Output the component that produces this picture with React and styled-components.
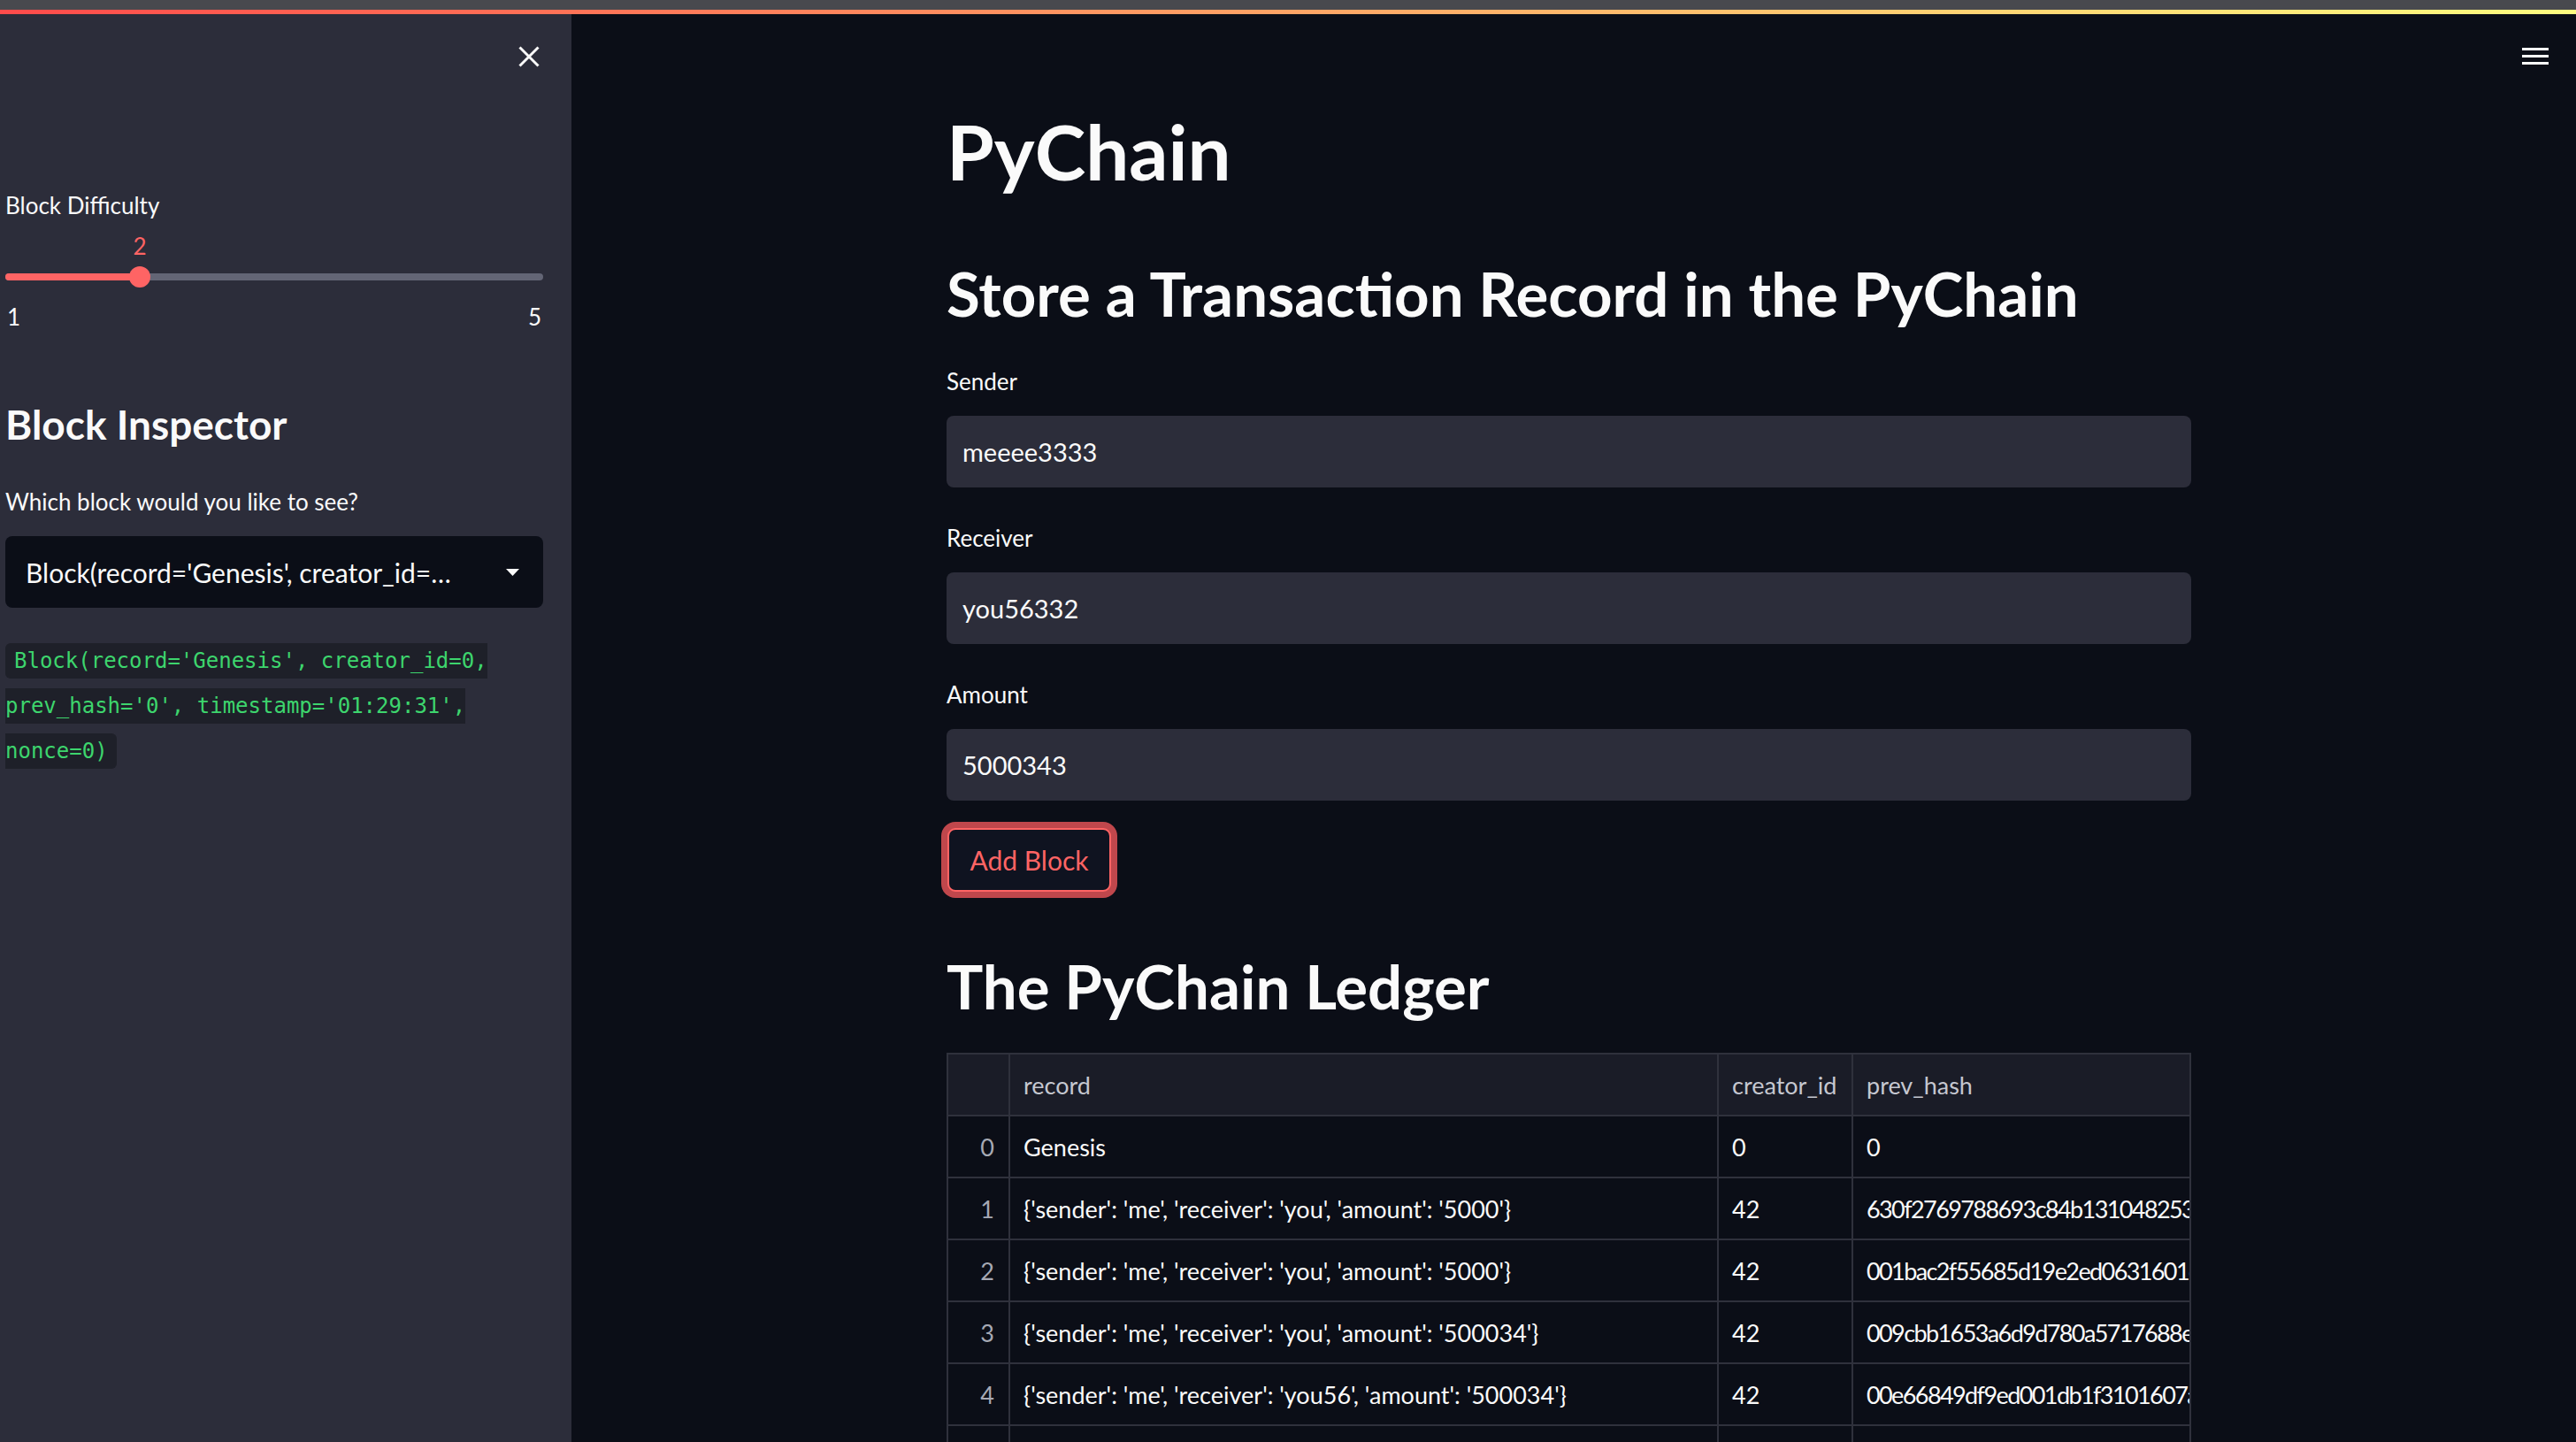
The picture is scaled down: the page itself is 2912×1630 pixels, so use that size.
import React from 'react';
import styled, { createGlobalStyle } from 'styled-components';

const GlobalStyle = createGlobalStyle`
  html, body {
    margin: 0;
    padding: 0;
    background: #0b0e17;
  }
  body {
    font-family: Lato, "Noto Sans", sans-serif;
    color: #fafafa;
  }
  * {
    box-sizing: border-box;
  }
`;

const Page = styled.div`
  width: 2912px;
  height: 1630px;
  overflow: hidden;
  display: flex;
  flex-direction: column;
`;

const BrowserBar = styled.div`
  height: 11px;
  flex-shrink: 0;
  background: #48494e;
`;

const Decoration = styled.div`
  height: 5px;
  flex-shrink: 0;
  background: linear-gradient(90deg, #ff4b4b, #fffd80);
`;

const Body = styled.div`
  flex: 1;
  min-height: 0;
  display: flex;
`;

/* sidebar */

const Sidebar = styled.aside`
  width: 646px;
  flex-shrink: 0;
  background: #2c2d3a;
  padding: 0 32px 0 6px;
  display: flex;
  flex-direction: column;
`;

const CloseRow = styled.div`
  height: 96px;
  display: flex;
  align-items: center;
  justify-content: flex-end;
  padding-right: 2px;
`;

const IconButton = styled.button`
  background: none;
  border: none;
  padding: 0;
  display: flex;
  color: #fafafa;
  cursor: pointer;
`;

const Label = styled.div`
  font-size: 26px;
  line-height: 36px;
  margin-top: ${(p) => p.$top || 0}px;
`;

const SliderTrackWrap = styled.div`
  position: relative;
  height: 24px;
  margin-top: 51px;
  display: flex;
  align-items: center;
`;

const Track = styled.div`
  position: relative;
  width: 100%;
  height: 8px;
  border-radius: 4px;
  background: #636575;
  overflow: hidden;
`;

const TrackFill = styled.div`
  height: 100%;
  background: #ff6464;
`;

const Thumb = styled.div`
  position: absolute;
  top: 50%;
  width: 24px;
  height: 24px;
  border-radius: 50%;
  background: #ff6464;
  transform: translate(-50%, -50%);
`;

const ThumbValue = styled.div`
  position: absolute;
  bottom: calc(100% + 8px);
  transform: translateX(-50%);
  font-size: 26px;
  line-height: 30px;
  color: #ff6464;
`;

const MinMaxRow = styled.div`
  display: flex;
  justify-content: space-between;
  font-size: 26px;
  line-height: 36px;
  margin-top: 15px;
  padding: 0 2px;
`;

const SideHeading = styled.h2`
  margin: 76px 0 0;
  font-size: 46px;
  line-height: 56px;
  font-weight: 700;
`;

const Select = styled.div`
  height: 81px;
  margin-top: 21px;
  background: #0b0e17;
  border-radius: 8px;
  display: flex;
  align-items: center;
  gap: 52px;
  padding: 0 27px 0 23px;
`;

const SelectValue = styled.span`
  flex: 1;
  min-width: 0;
  font-size: 30px;
  line-height: 40px;
  white-space: nowrap;
  overflow: hidden;
  text-overflow: ellipsis;
`;

const CodeParagraph = styled.p`
  margin: 35px 0 0;
  font-family: "DejaVu Sans Mono", "Liberation Mono", monospace;
  font-size: 24px;
  line-height: 51px;
`;

const InlineCode = styled.code`
  font-family: inherit;
  background: #1e2029;
  color: #3dd56d;
  padding: 6px 10px;
  border-radius: 6px;
`;

/* main */

const Main = styled.main`
  position: relative;
  flex: 1;
  padding: 105px 0 0 424px;
`;

const MenuButton = styled.button`
  position: absolute;
  top: 35px;
  right: 29px;
  background: none;
  border: none;
  padding: 2px;
  display: flex;
  color: #fafafa;
`;

const Content = styled.div`
  width: 1407px;
  display: flex;
  flex-direction: column;
`;

const Title = styled.h1`
  margin: 0;
  font-size: 87px;
  line-height: 100px;
  font-weight: 700;
`;

const Heading = styled.h2`
  margin: ${(p) => p.$top}px 0 0;
  font-size: 69px;
  line-height: 84px;
  font-weight: 700;
`;

const Field = styled.div`
  display: flex;
  flex-direction: column;
  gap: 21px;
  margin-top: ${(p) => p.$top}px;
`;

const TextInput = styled.input`
  height: 81px;
  border: none;
  border-radius: 8px;
  background: #2c2d3a;
  color: #fafafa;
  font-family: inherit;
  font-size: 29px;
  padding: 0 18px;
  outline: none;
`;

const AddButton = styled.button`
  align-self: flex-start;
  margin: 31px 0 0 1px;
  width: 185px;
  height: 72px;
  border: 2px solid #ff6464;
  border-radius: 9px;
  background: #0f1320;
  color: #ff6464;
  font-family: inherit;
  font-size: 30px;
  box-shadow: 0 0 0 7px #c0474c;
  cursor: pointer;
`;

const TableWrap = styled.div`
  margin-top: 33px;
  width: 1407px;
  border: 2px solid #2f313c;
  border-bottom: none;
  overflow: hidden;
`;

const Row = styled.div`
  display: grid;
  grid-template-columns: 70px 801px 152px 1000px 300px 160px;
  width: max-content;
  height: 70px;
  border-bottom: 2px solid #2f313c;
  background: ${(p) => (p.$header ? '#1a1c27' : 'transparent')};
  color: ${(p) => (p.$header ? '#c5c7d0' : '#fafafa')};
`;

const Cell = styled.div`
  display: flex;
  align-items: center;
  justify-content: ${(p) => (p.$index ? 'flex-end' : 'flex-start')};
  padding: 0 ${(p) => (p.$index ? 16 : 15)}px;
  border-right: 2px solid #2f313c;
  font-size: 27px;
  letter-spacing: ${(p) => (p.$hash ? '-1.6px' : 'normal')};
  white-space: nowrap;
  overflow: hidden;
  color: ${(p) => (p.$index ? '#a6a9b4' : 'inherit')};
`;

const blocks = [
  { record: 'Genesis', creator: '0', hash: '0', time: '01:29:31', nonce: '0' },
  {
    record: "{'sender': 'me', 'receiver': 'you', 'amount': '5000'}",
    creator: '42',
    hash: '630f2769788693c84b1310482537e1a0c6f4d2b9',
    time: '01:30:02',
    nonce: '141',
  },
  {
    record: "{'sender': 'me', 'receiver': 'you', 'amount': '5000'}",
    creator: '42',
    hash: '001bac2f55685d19e2ed0631601c7e4b8a92f3d0',
    time: '01:30:40',
    nonce: '117',
  },
  {
    record: "{'sender': 'me', 'receiver': 'you', 'amount': '500034'}",
    creator: '42',
    hash: '009cbb1653a6d9d780a5717688e2f04c1b93d6a7',
    time: '01:31:15',
    nonce: '356',
  },
  {
    record: "{'sender': 'me', 'receiver': 'you56', 'amount': '500034'}",
    creator: '42',
    hash: '00e66849df9ed001db1f3101607a8c2e5d4b9f13',
    time: '01:32:08',
    nonce: '98',
  },
  {
    record: "{'sender': 'meeee3333', 'receiver': 'you56332', 'amount': '5000343'}",
    creator: '42',
    hash: '00a41d7c9e3b5f2086d1c4e7b09a3f6528c1d4e0',
    time: '01:33:20',
    nonce: '212',
  },
];

function CloseIcon() {
  return (
    <svg width="28" height="28" viewBox="0 0 28 28">
      <path d="M3.5 3.5 L24.5 24.5 M24.5 3.5 L3.5 24.5" stroke="currentColor" strokeWidth="3" strokeLinecap="butt" />
    </svg>
  );
}

function MenuIcon() {
  return (
    <svg width="30" height="22" viewBox="0 0 30 22">
      <rect x="0" y="1" width="30" height="3" fill="currentColor" />
      <rect x="0" y="9" width="30" height="3" fill="currentColor" />
      <rect x="0" y="17" width="30" height="3" fill="currentColor" />
    </svg>
  );
}

function Caret() {
  return (
    <svg width="15" height="8" viewBox="0 0 15 8">
      <polygon points="0,0 15,0 7.5,8" fill="#fafafa" />
    </svg>
  );
}

function DifficultySlider({ value, min, max }) {
  const pct = ((value - min) / (max - min)) * 100;
  return (
    <>
      <SliderTrackWrap>
        <Track>
          <TrackFill style={{ width: `${pct}%` }} />
        </Track>
        <Thumb style={{ left: `${pct}%` }} />
        <ThumbValue style={{ left: `${pct}%` }}>{value}</ThumbValue>
      </SliderTrackWrap>
      <MinMaxRow>
        <span>{min}</span>
        <span>{max}</span>
      </MinMaxRow>
    </>
  );
}

export default function App() {
  return (
    <Page>
      <GlobalStyle />
      <BrowserBar />
      <Decoration />
      <Body>
        <Sidebar>
          <CloseRow>
            <IconButton aria-label="Close sidebar">
              <CloseIcon />
            </IconButton>
          </CloseRow>
          <Label $top={102}>Block Difficulty</Label>
          <DifficultySlider value={2} min={1} max={5} />
          <SideHeading>Block Inspector</SideHeading>
          <Label $top={41}>Which block would you like to see?</Label>
          <Select>
            <SelectValue>
              Block(record='Genesis', creator_id=0, prev_hash='0', timestamp='01:29:31', nonce=0)
            </SelectValue>
            <Caret />
          </Select>
          <CodeParagraph>
            <InlineCode>
              Block(record='Genesis', creator_id=0, prev_hash='0', timestamp='01:29:31', nonce=0)
            </InlineCode>
          </CodeParagraph>
        </Sidebar>

        <Main>
          <MenuButton aria-label="Menu">
            <MenuIcon />
          </MenuButton>
          <Content>
            <Title>PyChain</Title>
            <Heading $top={69}>Store a Transaction Record in the PyChain</Heading>

            <Field $top={39}>
              <Label>Sender</Label>
              <TextInput readOnly value="meeee3333" />
            </Field>
            <Field $top={39}>
              <Label>Receiver</Label>
              <TextInput readOnly value="you56332" />
            </Field>
            <Field $top={39}>
              <Label>Amount</Label>
              <TextInput readOnly value="5000343" />
            </Field>

            <AddButton>Add Block</AddButton>

            <Heading $top={65}>The PyChain Ledger</Heading>

            <TableWrap>
              <Row $header>
                <Cell $index />
                <Cell>record</Cell>
                <Cell>creator_id</Cell>
                <Cell>prev_hash</Cell>
                <Cell>timestamp</Cell>
                <Cell>nonce</Cell>
              </Row>
              {blocks.map((b, i) => (
                <Row key={i}>
                  <Cell $index>{i}</Cell>
                  <Cell>{b.record}</Cell>
                  <Cell>{b.creator}</Cell>
                  <Cell $hash>{b.hash}</Cell>
                  <Cell>{b.time}</Cell>
                  <Cell>{b.nonce}</Cell>
                </Row>
              ))}
            </TableWrap>
          </Content>
        </Main>
      </Body>
    </Page>
  );
}
